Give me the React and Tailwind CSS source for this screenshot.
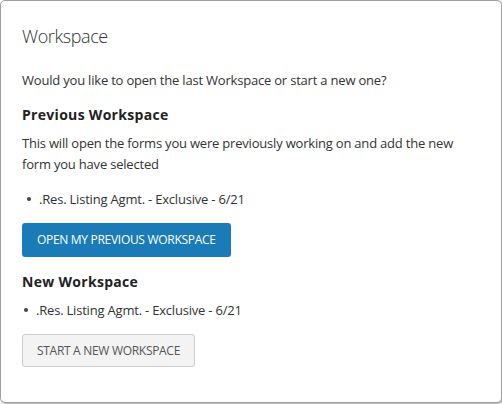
import React from "react";

export default function App() {
  const font = { fontFamily: '"Open Sans", "Noto Sans", sans-serif' };
  return (
    <div className="w-[502px] h-[404px] bg-white" style={font}>
      <div className="w-[502px] h-[403px] border border-[#a0a0a0] rounded-[5px] bg-white shadow-[1px_1px_2px_rgba(0,0,0,0.35)] px-[21px] pt-[22px] text-[#333]">
        <div className="text-[18px] leading-[26px] font-light tracking-[-0.4px] text-[#333]">Workspace</div>
        <div className="mt-[21px] text-[13px] leading-[20px] tracking-[-0.2px] text-[#333]">
          Would you like to open the last Workspace or start a new one?
        </div>
        <div className="mt-[15px] text-[14px] leading-[20px] font-bold tracking-[0.3px] text-[#222]">
          Previous Workspace
        </div>
        <div className="mt-[8px] text-[13px] leading-[21px] tracking-[-0.2px] text-[#333] w-[440px]">
          This will open the forms you were previously working on and add the new form you have selected
        </div>
        <ul className="mt-[14px] text-[13px] leading-[20px] tracking-[-0.2px] text-[#333]">
          <li className="flex items-center">
            <span className="w-[17px] pl-[5px] flex"><span className="w-[4px] h-[4px] rounded-full bg-[#444]" /></span>
            <span>.Res. Listing Agmt. - Exclusive - 6/21</span>
          </li>
        </ul>
        <button className="mt-[14px] h-[34px] px-[15px] rounded-[3px] bg-[#1a7bb9] text-white text-[12px] tracking-[-0.3px] uppercase leading-[34px]">
          Open My Previous Workspace
        </button>
        <div className="mt-[15px] text-[14px] leading-[20px] font-bold tracking-[0.3px] text-[#222]">
          New Workspace
        </div>
        <ul className="mt-[8px] text-[13px] leading-[20px] tracking-[-0.2px] text-[#333]">
          <li className="flex items-center">
            <span className="w-[14px] pl-[2px] flex"><span className="w-[4px] h-[4px] rounded-full bg-[#444]" /></span>
            <span>.Res. Listing Agmt. - Exclusive - 6/21</span>
          </li>
        </ul>
        <button className="mt-[14px] h-[33px] px-[14px] rounded-[3px] border border-[#cccccc] bg-[#f3f3f3] text-[#555] text-[12px] tracking-[-0.3px] uppercase leading-[31px]">
          Start a New Workspace
        </button>
      </div>
    </div>
  );
}
